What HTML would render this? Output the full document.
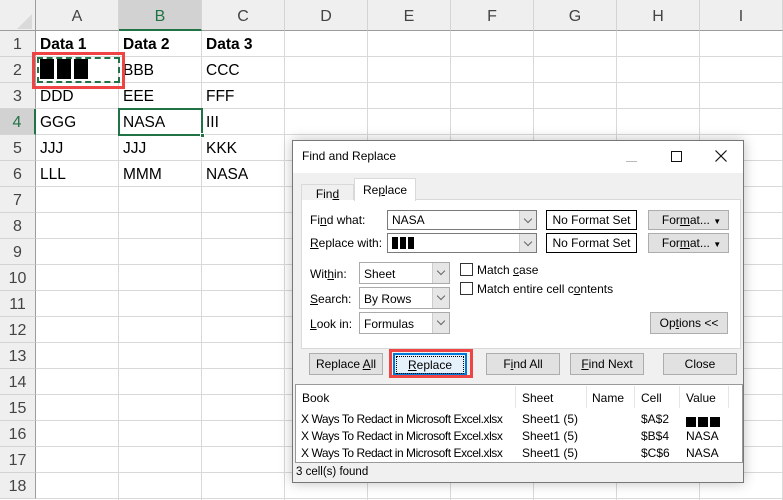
<!DOCTYPE html>
<html><head><meta charset="utf-8"><style>
*{margin:0;padding:0;box-sizing:border-box}
body{width:783px;height:500px;overflow:hidden;background:#fff;position:relative;font-family:"Liberation Sans",sans-serif}
.a{position:absolute}
.grid{left:36px;top:31px;width:747px;height:469px;
background-image:linear-gradient(to right,#d9d9d9 1px,transparent 1px),linear-gradient(to bottom,#d9d9d9 1px,transparent 1px);
background-size:83px 26px;background-position:-1px -1px}
.ch{top:0;height:31px;background:#efefef;border-bottom:1px solid #9c9c9c;border-right:1px solid #d4d4d4;font-size:16px;color:#444;text-align:center;line-height:33px}
.rh{left:0;width:36px;height:26px;background:#efefef;border-bottom:1px solid #d4d4d4;border-right:1px solid #9c9c9c;font-size:16px;color:#444;text-align:center;line-height:27px}
.c{font-size:15.5px;color:#000;height:26px;line-height:27px}
.b{font-weight:bold}
.blk{display:inline-block;width:14px;height:20px;background:#000;margin-right:3px;vertical-align:-4px}
.d{font-size:12px;color:#000}
.btn{background:#e1e1e1;border:1px solid #adadad;text-align:center;font-size:12px;line-height:20px}
.box{background:#fff;border:1px solid #7a7a7a}
.dd{position:absolute;right:0;top:0;bottom:0;width:17px;background:#e6e6e6;border-left:1px solid #ccc}
.dd:after{content:"";position:absolute;left:5px;top:5px;width:5px;height:5px;border-right:1px solid #666;border-bottom:1px solid #666;transform:rotate(45deg)}
.cb{width:13px;height:13px;border:1px solid #333;background:#fff}
.bk{letter-spacing:-0.45px}
</style></head><body>
<div class="a grid"></div>
<div class="a" style="left:0;top:0;width:36px;height:31px;background:#efefef;border-right:1px solid #9c9c9c;border-bottom:1px solid #9c9c9c"></div>
<div class="a" style="left:17px;top:14px;width:0;height:0;border-left:15px solid transparent;border-bottom:15px solid #dadada"></div>
<div class="a ch" style="left:36px;width:83px">A</div>
<div class="a ch" style="left:119px;width:83px;background:#d2d2d2;color:#217346;border-bottom:2px solid #217346">B</div>
<div class="a ch" style="left:202px;width:83px">C</div>
<div class="a ch" style="left:285px;width:83px">D</div>
<div class="a ch" style="left:368px;width:83px">E</div>
<div class="a ch" style="left:451px;width:83px">F</div>
<div class="a ch" style="left:534px;width:83px">G</div>
<div class="a ch" style="left:617px;width:83px">H</div>
<div class="a ch" style="left:700px;width:83px">I</div>
<div class="a rh" style="top:31px">1</div>
<div class="a rh" style="top:57px">2</div>
<div class="a rh" style="top:83px">3</div>
<div class="a rh" style="top:109px;background:#d2d2d2;color:#217346;border-right:2px solid #217346">4</div>
<div class="a rh" style="top:135px">5</div>
<div class="a rh" style="top:161px">6</div>
<div class="a rh" style="top:187px">7</div>
<div class="a rh" style="top:213px">8</div>
<div class="a rh" style="top:239px">9</div>
<div class="a rh" style="top:265px">10</div>
<div class="a rh" style="top:291px">11</div>
<div class="a rh" style="top:317px">12</div>
<div class="a rh" style="top:343px">13</div>
<div class="a rh" style="top:369px">14</div>
<div class="a rh" style="top:395px">15</div>
<div class="a rh" style="top:421px">16</div>
<div class="a rh" style="top:447px">17</div>
<div class="a rh" style="top:473px">18</div>

<div class="a c b" style="left:40px;top:31px">Data 1</div>
<div class="a c b" style="left:123px;top:31px">Data 2</div>
<div class="a c b" style="left:206px;top:31px">Data 3</div>
<div class="a c" style="left:40px;top:57px"><span class="blk"></span><span class="blk"></span><span class="blk"></span></div>
<div class="a c" style="left:123px;top:57px">BBB</div>
<div class="a c" style="left:206px;top:57px">CCC</div>
<div class="a c" style="left:40px;top:83px">DDD</div>
<div class="a c" style="left:123px;top:83px">EEE</div>
<div class="a c" style="left:206px;top:83px">FFF</div>
<div class="a c" style="left:40px;top:109px">GGG</div>
<div class="a c" style="left:123px;top:109px">NASA</div>
<div class="a c" style="left:206px;top:109px">III</div>
<div class="a c" style="left:40px;top:135px">JJJ</div>
<div class="a c" style="left:123px;top:135px">JJJ</div>
<div class="a c" style="left:206px;top:135px">KKK</div>
<div class="a c" style="left:40px;top:161px">LLL</div>
<div class="a c" style="left:123px;top:161px">MMM</div>
<div class="a c" style="left:206px;top:161px">NASA</div>
<div class="a" style="left:37px;top:57px;width:83px;height:26px;border:2px dashed #217346"></div>
<div class="a" style="left:32px;top:52px;width:93px;height:37px;border:3px solid #ef4444"></div>
<div class="a" style="left:118px;top:108px;width:85px;height:28px;border:2px solid #217346"></div>
<div class="a" style="left:200px;top:133px;width:5px;height:5px;background:#217346;border:1px solid #fff"></div>

<!-- dialog -->
<div class="a" style="left:292px;top:140px;width:452px;height:343px;background:#f0f0f0;border:1px solid #777;box-shadow:0 0 12px rgba(0,0,0,.25)">
 <div class="a" style="left:0;top:0;width:450px;height:32px;background:#fff"></div>
 <div class="a d" style="left:9px;top:8px">Find and Replace</div>
 <div class="a" style="left:333px;top:20px;width:11px;height:1px;background:#bbb"></div>
 <div class="a" style="left:378px;top:10px;width:11px;height:11px;border:1px solid #111"></div>
 <svg class="a" style="left:422px;top:9px" width="12" height="12"><path d="M0.5 0.5L11.5 11.5M11.5 0.5L0.5 11.5" stroke="#111" stroke-width="1.2"/></svg>
 <div class="a" style="left:8px;top:58px;width:440px;height:150px;background:#fff;border:1px solid #d9d9d9"></div>
 <div class="a d" style="left:8px;top:43px;width:53px;height:16px;border:1px solid #d9d9d9;border-bottom:none;text-align:center;line-height:18px;background:#f0f0f0">Fin<u>d</u></div>
 <div class="a d" style="left:61px;top:37px;width:62px;height:23px;border:1px solid #d9d9d9;border-bottom:none;background:#fff;text-align:center;line-height:22px">Re<u>p</u>lace</div>
 <div class="a d" style="left:17px;top:72px">Fi<u>n</u>d what:</div>
 <div class="a box d" style="left:94px;top:69px;width:150px;height:20px;padding:2px 4px">NASA<div class="dd"></div></div>
 <div class="a d" style="left:17px;top:95px"><u>R</u>eplace with:</div>
 <div class="a box d" style="left:94px;top:92px;width:150px;height:20px;padding:3px 4px"><span style="display:inline-block;width:6px;height:12px;background:#000;margin-right:2px"></span><span style="display:inline-block;width:6px;height:12px;background:#000;margin-right:2px"></span><span style="display:inline-block;width:6px;height:12px;background:#000"></span><div class="dd"></div></div>
 <div class="a d" style="left:253px;top:69px;width:91px;height:20px;border:1px solid #000;background:#fff;text-align:center;line-height:18px">No Format Set</div>
 <div class="a d" style="left:253px;top:92px;width:91px;height:20px;border:1px solid #000;background:#fff;text-align:center;line-height:18px">No Format Set</div>
 <div class="a btn" style="left:355px;top:69px;width:81px;height:20px;line-height:18px;padding-left:6px">For<u>m</u>at... <span style="font-size:8px">▼</span></div>
 <div class="a btn" style="left:355px;top:92px;width:81px;height:20px;line-height:18px;padding-left:6px">For<u>m</u>at... <span style="font-size:8px">▼</span></div>
 <div class="a d" style="left:17px;top:126px">Wit<u>h</u>in:</div>
 <div class="a d" style="left:17px;top:151px"><u>S</u>earch:</div>
 <div class="a d" style="left:17px;top:176px"><u>L</u>ook in:</div>
 <div class="a box d" style="left:66px;top:121px;width:91px;height:22px;padding:4px 4px;border-color:#aaa">Sheet<div class="dd"></div></div>
 <div class="a box d" style="left:66px;top:146px;width:91px;height:22px;padding:4px 4px;border-color:#aaa">By Rows<div class="dd"></div></div>
 <div class="a box d" style="left:66px;top:171px;width:91px;height:22px;padding:4px 4px;border-color:#aaa">Formulas<div class="dd"></div></div>
 <div class="a cb" style="left:167px;top:122px"></div>
 <div class="a d" style="left:184px;top:122px">Match <u>c</u>ase</div>
 <div class="a cb" style="left:167px;top:141px"></div>
 <div class="a d" style="left:184px;top:141px">Match entire cell c<u>o</u>ntents</div>
 <div class="a btn" style="left:357px;top:171px;width:78px;height:22px">Op<u>t</u>ions &lt;&lt;</div>
 <div class="a btn" style="left:16px;top:212px;width:74px;height:22px">Replace <u>A</u>ll</div>
 <div class="a" style="left:96px;top:208px;width:84px;height:29px;border:3px solid #ef4444"></div>
 <div class="a btn" style="left:100px;top:212px;width:74px;height:22px;border:2px solid #0078d7;background:#e5f1fb"><span style="display:block;margin:1px;border:1px dotted #000;line-height:16px"><u>R</u>eplace</span></div>
 <div class="a btn" style="left:193px;top:212px;width:74px;height:22px">F<u>i</u>nd All</div>
 <div class="a btn" style="left:277px;top:212px;width:74px;height:22px"><u>F</u>ind Next</div>
 <div class="a btn" style="left:370px;top:212px;width:74px;height:22px">Close</div>
 <div class="a" style="left:2px;top:243px;width:448px;height:79px;background:#fff;border:1px solid #999"></div>
 <div class="a" style="left:222px;top:245px;width:1px;height:22px;background:#e5e5e5"></div>
 <div class="a" style="left:293px;top:245px;width:1px;height:22px;background:#e5e5e5"></div>
 <div class="a" style="left:341px;top:245px;width:1px;height:22px;background:#e5e5e5"></div>
 <div class="a" style="left:386px;top:245px;width:1px;height:22px;background:#e5e5e5"></div>
 <div class="a" style="left:435px;top:245px;width:1px;height:22px;background:#e5e5e5"></div>
 <div class="a d" style="left:9px;top:250px">Book</div>
 <div class="a d" style="left:229px;top:250px">Sheet</div>
 <div class="a d" style="left:299px;top:250px">Name</div>
 <div class="a d" style="left:348px;top:250px">Cell</div>
 <div class="a d" style="left:393px;top:250px">Value</div>
 <div class="a d bk" style="left:8px;top:271px">X Ways To Redact in Microsoft Excel.xlsx</div>
 <div class="a d" style="left:229px;top:271px">Sheet1 (5)</div>
 <div class="a d" style="left:348px;top:271px">$A$2</div>
 <div class="a" style="left:393px;top:273px"><span style="display:inline-block;width:10px;height:10px;background:#000;margin-right:2px"></span><span style="display:inline-block;width:10px;height:10px;background:#000;margin-right:2px"></span><span style="display:inline-block;width:10px;height:10px;background:#000"></span></div>
 <div class="a d bk" style="left:8px;top:288px">X Ways To Redact in Microsoft Excel.xlsx</div>
 <div class="a d" style="left:229px;top:288px">Sheet1 (5)</div>
 <div class="a d" style="left:348px;top:288px">$B$4</div>
 <div class="a d" style="left:393px;top:288px">NASA</div>
 <div class="a d bk" style="left:8px;top:305px">X Ways To Redact in Microsoft Excel.xlsx</div>
 <div class="a d" style="left:229px;top:305px">Sheet1 (5)</div>
 <div class="a d" style="left:348px;top:305px">$C$6</div>
 <div class="a d" style="left:393px;top:305px">NASA</div>
 <div class="a d" style="left:3px;top:325px;font-size:11.5px">3 cell(s) found</div>
</div>
</body></html>
